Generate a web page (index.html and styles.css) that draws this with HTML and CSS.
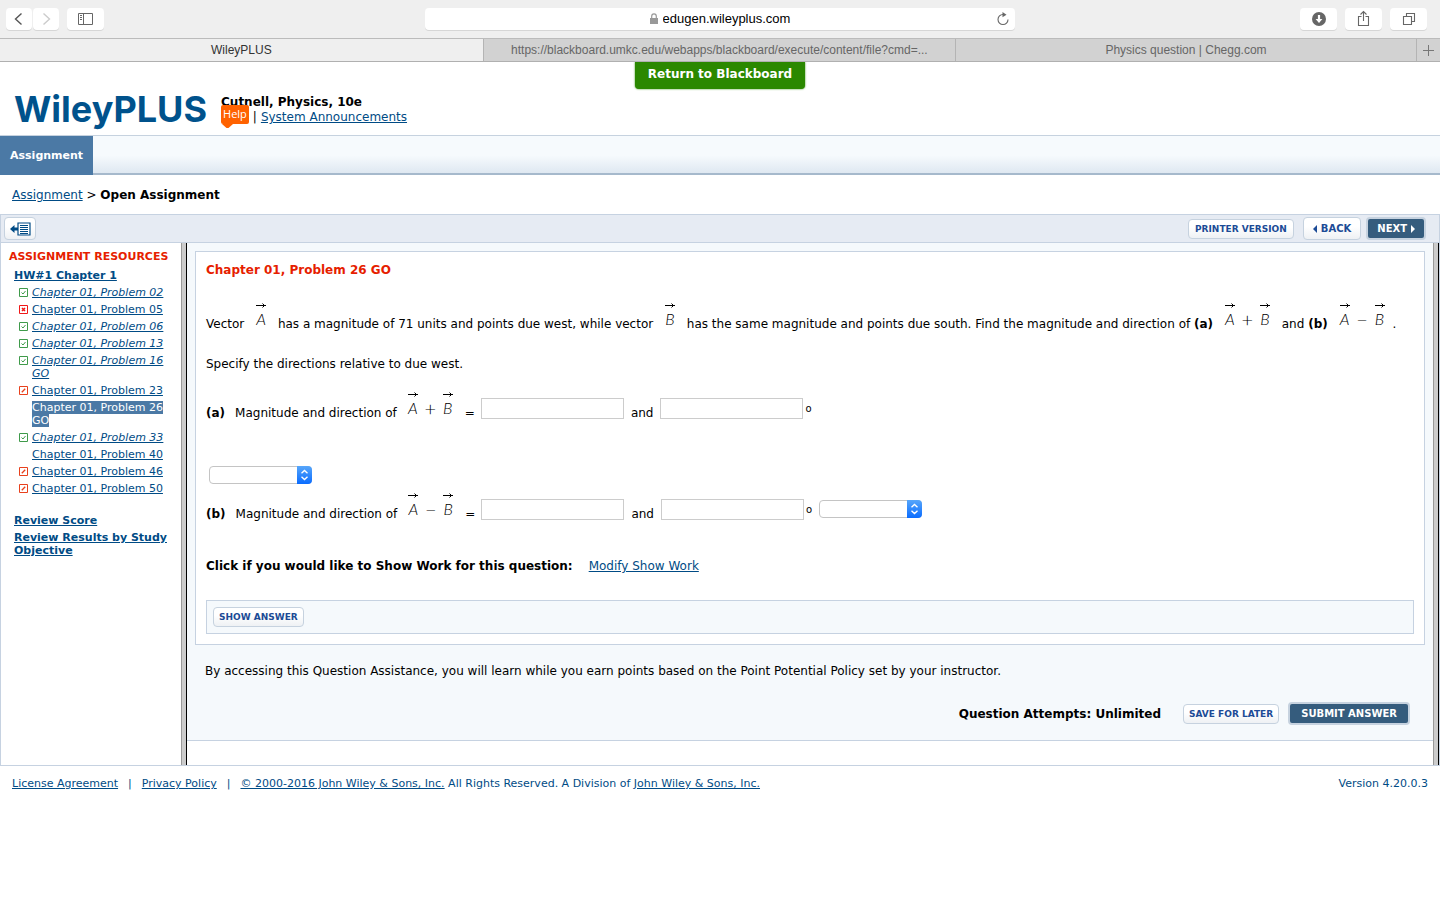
FILE: index.html
```html
<!DOCTYPE html>
<html lang="en">
<head>
<meta charset="utf-8">
<title>WileyPLUS</title>
<link rel="stylesheet" href="styles.css">
</head>
<body>
<svg class="defs" width="0" height="0" aria-hidden="true">
  <symbol id="arrow" viewBox="0 0 10 5"><path d="M0 2.500H10M6.500 .5L8.500 2.500L6.500 4.500" fill="none" stroke="#000"/></symbol>
  <symbol id="ok" viewBox="0 0 9 9"><path d="M.5 .5H8.500V8.500H.5Z" fill="#fff" stroke="#3f9a4a"/><path d="M2.500 4.500L4 6L6.500 3" fill="none" stroke="#3f9a4a"/></symbol>
  <symbol id="wrong" viewBox="0 0 9 9"><path d="M.5 .5H8.500V8.500H.5Z" fill="#fff" stroke="#f01818"/><path d="M3 3L6 6M6 3L3 6" fill="none" stroke="#f01818" stroke-width="1.500"/></symbol>
  <symbol id="part" viewBox="0 0 9 9"><path d="M.5 .5H8.500V8.500H.5Z" fill="#fff" stroke="#e8401c"/><path d="M2.800 6.200L6.200 2.800" fill="none" stroke="#e8401c" stroke-width="1.300"/></symbol>
  <symbol id="updown" viewBox="0 0 15 18"><path d="M4.500 7.200L7.500 4.500L10.500 7.200M4.500 10.800L7.500 13.500L10.500 10.800" fill="none" stroke="#fff" stroke-width="1.400"/></symbol>
</svg>

<div class="browser">
  <div class="browser-bar">
    <div class="bar-side">
      <div class="nav-pair">
        <button class="chip narrow" aria-label="Back"><svg width="26" height="22" viewBox="0 0 26 22"><path d="M15.500 5.500L9.500 11L15.500 16.500" fill="none" stroke="#555" stroke-width="1.400"/></svg></button>
        <button class="chip narrow" aria-label="Forward"><svg width="26" height="22" viewBox="0 0 26 22"><path d="M10.500 5.500L16.500 11L10.500 16.500" fill="none" stroke="#ccc" stroke-width="1.400"/></svg></button>
      </div>
      <button class="chip" aria-label="Sidebar"><svg width="37" height="22" viewBox="0 0 37 22"><path d="M11.500 5.500H25.500V16.500H11.500ZM16.500 5.500V16.500M13 7.500H15M13 9.500H15M13 11.500H15" fill="none" stroke="#666"/></svg></button>
    </div>
    <div class="address">
      <svg width="8" height="12" viewBox="0 0 8 12"><path d="M0 5H8V11H0Z" fill="#999"/><path d="M1.700 5V3.200a2.300 2.300 0 0 1 4.600 0V5" fill="none" stroke="#999" stroke-width="1.200"/></svg>
      <input class="url" aria-label="Address" value="edugen.wileyplus.com">
      <button class="reload" aria-label="Reload"><svg width="14" height="14" viewBox="0 0 14 14"><path d="M7 2.500A5 5 0 1 0 12 7.500" fill="none" stroke="#666" stroke-width="1.100"/><path d="M6.500 0L10.500 2.700L6.500 5.200Z" fill="#666"/></svg></button>
    </div>
    <div class="bar-side end">
      <button class="chip" aria-label="Downloads"><svg width="37" height="22" viewBox="0 0 37 22"><circle cx="19" cy="11" r="7" fill="#666"/><path d="M19 7V12" stroke="#fff" stroke-width="2.200"/><path d="M15.600 11H22.400L19 15Z" fill="#fff"/></svg></button>
      <button class="chip" aria-label="Share"><svg width="37" height="22" viewBox="0 0 37 22"><path d="M16.500 8.500H13.500V17.500H23.500V8.500H20.500M18.500 13V3.500M15.500 6.500L18.500 3.500L21.500 6.500" fill="none" stroke="#666" stroke-width="1.100"/></svg></button>
      <button class="chip" aria-label="Tabs"><svg width="37" height="22" viewBox="0 0 37 22"><path d="M13.500 8.500H21.500V16.500H13.500ZM16.500 8V5.500H24.500V13.500H22" fill="none" stroke="#666" stroke-width="1.100"/></svg></button>
    </div>
  </div>
  <div class="tabs">
    <button class="tab active">WileyPLUS</button>
    <button class="tab">https://blackboard.umkc.edu/webapps/blackboard/execute/content/file?cmd=...</button>
    <button class="tab">Physics question | Chegg.com</button>
    <button class="tab-add" aria-label="New tab"><svg width="11" height="11" viewBox="0 0 11 11"><path d="M0 5.500H11M5.500 0V11" stroke="#777"/></svg></button>
  </div>
</div>

<a class="return" href="#">Return to Blackboard</a>

<header class="header">
  <div class="logo">WileyPLUS</div>
  <div class="course">
    <strong>Cutnell, Physics, 10e</strong>
    <div class="course-links">
      <a class="help" href="#">Help<svg width="12" height="4" viewBox="0 0 12 4"><path d="M1 0H12L7.500 4L5.500 4Z" fill="#ff6200"/></svg></a>
      <span>|</span>
      <a href="#">System Announcements</a>
    </div>
  </div>
</header>

<nav class="main-nav"><a href="#">Assignment</a></nav>

<div class="crumbs"><a href="#">Assignment</a> &gt; <strong>Open Assignment</strong></div>

<div class="workspace">
  <div class="tools">
    <button class="btn icon-btn" aria-label="Hide resources"><svg width="21" height="14" viewBox="0 0 21 14"><path d="M0 7L4.500 3V5.500H8V8.500H4.500V11Z" fill="#004b85"/><path d="M8 1H20V13H8Z" fill="#fff" stroke="#004b85" stroke-width="1.200"/><path d="M10 3.500H18M10 5.500H18M10 7.500H18M10 9.500H18M10 11.500H18" stroke="#004b85" stroke-width="1"/></svg></button>
    <div class="tool-actions">
      <button class="btn small printer">PRINTER VERSION</button>
      <button class="btn"><svg width="4" height="8" viewBox="0 0 4 8"><path d="M4 0V8L0 4Z" fill="#1c4b96"/></svg>BACK</button>
      <button class="btn dark">NEXT<svg width="4" height="8" viewBox="0 0 4 8"><path d="M0 0V8L4 4Z" fill="#fff"/></svg></button>
    </div>
  </div>
  <div class="columns">
    <aside class="sidebar">
      <h2>ASSIGNMENT RESOURCES</h2>
      <a class="group" href="#">HW#1 Chapter 1</a>
      <ul class="problems">
        <li><svg><use href="#ok"/></svg><a class="done" href="#">Chapter 01, Problem 02</a></li>
        <li><svg><use href="#wrong"/></svg><a href="#">Chapter 01, Problem 05</a></li>
        <li><svg><use href="#ok"/></svg><a class="done" href="#">Chapter 01, Problem 06</a></li>
        <li><svg><use href="#ok"/></svg><a class="done" href="#">Chapter 01, Problem 13</a></li>
        <li><svg><use href="#ok"/></svg><a class="done" href="#">Chapter 01, Problem 16 GO</a></li>
        <li><svg><use href="#part"/></svg><a href="#">Chapter 01, Problem 23</a></li>
        <li><svg></svg><span><a class="current" href="#">Chapter 01, Problem 26 GO</a></span></li>
        <li><svg><use href="#ok"/></svg><a class="done" href="#">Chapter 01, Problem 33</a></li>
        <li><svg></svg><a href="#">Chapter 01, Problem 40</a></li>
        <li><svg><use href="#part"/></svg><a href="#">Chapter 01, Problem 46</a></li>
        <li><svg><use href="#part"/></svg><a href="#">Chapter 01, Problem 50</a></li>
      </ul>
      <a class="group" href="#">Review Score</a>
      <a class="group" href="#">Review Results by Study Objective</a>
    </aside>
    <div class="divider"></div>
    <main class="main">
      <div class="question-area">
        <section class="card">
          <h1>Chapter 01, Problem 26 GO</h1>
          <p class="statement">Vector <span class="formula"><span class="vec"><svg><use href="#arrow"/></svg>A</span></span> has a magnitude of 71 units and points due west, while vector <span class="formula"><span class="vec"><svg><use href="#arrow"/></svg>B</span></span> has the same magnitude and points due south. Find the magnitude and direction of <b>(a)</b> <span class="formula"><span class="vec"><svg><use href="#arrow"/></svg>A</span><span class="op">+</span><span class="vec"><svg><use href="#arrow"/></svg>B</span></span> and <b>(b)</b> <span class="formula"><span class="vec"><svg><use href="#arrow"/></svg>A</span><span class="op">−</span><span class="vec"><svg><use href="#arrow"/></svg>B</span></span>.<br>Specify the directions relative to due west.</p>
          <div class="answer">
            <span class="prompt"><b>(a)</b>Magnitude and direction of</span>
            <span class="formula"><span class="vec"><svg><use href="#arrow"/></svg>A</span><span class="op">+</span><span class="vec"><svg><use href="#arrow"/></svg>B</span></span>
            <span class="eq">=</span>
            <input class="field" aria-label="Part a magnitude">
            <span class="and">and</span>
            <input class="field" aria-label="Part a angle">
            <span class="deg">o</span>
          </div>
          <div class="direction">
            <span class="pick"><select aria-label="Part a direction"><option></option></select><svg><use href="#updown"/></svg></span>
          </div>
          <div class="answer">
            <span class="prompt"><b>(b)</b>Magnitude and direction of</span>
            <span class="formula"><span class="vec"><svg><use href="#arrow"/></svg>A</span><span class="op">−</span><span class="vec"><svg><use href="#arrow"/></svg>B</span></span>
            <span class="eq">=</span>
            <input class="field" aria-label="Part b magnitude">
            <span class="and">and</span>
            <input class="field" aria-label="Part b angle">
            <span class="deg">o</span>
            <span class="pick"><select aria-label="Part b direction"><option></option></select><svg><use href="#updown"/></svg></span>
          </div>
          <div class="show-work"><strong>Click if you would like to Show Work for this question:</strong><a href="#">Modify Show Work</a></div>
          <div class="answer-bar"><button class="btn small">SHOW ANSWER</button></div>
        </section>
        <p class="policy">By accessing this Question Assistance, you will learn while you earn points based on the Point Potential Policy set by your instructor.</p>
        <div class="submit-row">
          <strong>Question Attempts: Unlimited</strong>
          <button class="btn small save">SAVE FOR LATER</button>
          <button class="btn dark submit">SUBMIT ANSWER</button>
        </div>
      </div>
    </main>
    <div class="divider"></div>
  </div>
</div>

<footer class="footer">
  <div><a href="#">License Agreement</a><span class="bar">|</span><a href="#">Privacy Policy</a><span class="bar">|</span><a href="#">© 2000-2016 John Wiley &amp; Sons, Inc.</a> All Rights Reserved. A Division of <a href="#">John Wiley &amp; Sons, Inc.</a></div>
  <div>Version 4.20.0.3</div>
</footer>
</body>
</html>
```

FILE: styles.css
```css
* { box-sizing: border-box; }
body {
  margin: 0;
  background: #fff;
  color: #000;
  font: 12px/16px Verdana, "DejaVu Sans", sans-serif;
}
a { color: #004b85; }
button, input, select { font: inherit; margin: 0; }
svg { display: block; flex: none; }
.defs { position: absolute; }

/* Browser chrome */
.browser { font-family: "Liberation Sans", Arial, sans-serif; }
.browser-bar {
  display: grid;
  grid-template-columns: 1fr minmax(0, 590px) 1fr;
  align-items: center;
  height: 38px;
  background: #efefef;
}
.bar-side { display: flex; gap: 8px; padding-left: 6px; }
.bar-side.end { justify-content: flex-end; padding: 0 13px 0 0; }
.nav-pair { display: flex; gap: 1px; }
.chip {
  width: 37px;
  height: 22px;
  padding: 0;
  border: 0;
  border-radius: 4px;
  background: #fff;
  box-shadow: 0 1px 0 #d6d6d6;
}
.chip.narrow { width: 26px; }
.address {
  display: flex;
  align-items: center;
  justify-content: center;
  gap: 5px;
  position: relative;
  height: 22px;
  border-radius: 4px;
  background: #fff;
  box-shadow: 0 1px 0 #d6d6d6;
}
.url {
  width: 128px;
  padding: 0;
  border: 0;
  background: none;
  font-size: 13px;
}
.reload {
  position: absolute;
  right: 5px;
  top: 4px;
  padding: 0;
  border: 0;
  background: none;
}
.tabs {
  display: flex;
  height: 24px;
  border-top: 1px solid #bbb;
  border-bottom: 1px solid #b0b0b0;
  background: #d2d2d2;
}
.tab {
  flex: 460;
  min-width: 0;
  padding: 0 12px;
  border: 0;
  border-right: 1px solid #b4b4b4;
  background: none;
  color: #666;
  font-size: 12px;
  line-height: 22px;
  white-space: nowrap;
}
.tab:nth-child(2) { flex-grow: 472; }
.tab.active { flex-grow: 484; background: #efefef; color: #333; }
.tab-add {
  display: flex;
  align-items: center;
  justify-content: center;
  width: 23px;
  padding: 0;
  border: 0;
  background: none;
}

/* Page header */
.return {
  display: block;
  width: 170px;
  height: 27px;
  margin: 0 auto;
  border-radius: 0 0 4px 4px;
  background: #2b8800;
  box-shadow: 0 0 2px #2b8800;
  clip-path: inset(0 -3px -3px);
  color: #fff;
  font-weight: bold;
  line-height: 24px;
  text-align: center;
  text-decoration: none;
}
.header {
  display: flex;
  gap: 14px;
  height: 46px;
  padding: 0 14px;
}
.logo {
  color: #00528c;
  font: bold 36px/40px Inter, "Liberation Sans", sans-serif;
}
.course { padding-top: 6px; line-height: 15px; }
.course-links { display: flex; gap: 4px; }
.help {
  position: relative;
  height: 19px;
  margin-top: -5px;
  padding: 0 2px;
  border-radius: 2px;
  background: #ff6200;
  color: #fff;
  font: 11px/18px "Open Sans", sans-serif;
  text-decoration: none;
}
.help svg { position: absolute; left: 0; top: 19px; }
.main-nav {
  display: flex;
  height: 40px;
  border-top: 1px solid #c6d2df;
  background: linear-gradient(#f6fafd 0, #f6fafd 50%, #dce6f0 100%);
  box-shadow: inset 0 -2px 0 #a6b9cc;
}
.main-nav a {
  padding: 0 10px;
  background: #4b79a5;
  color: #fff;
  font-size: 11px;
  font-weight: bold;
  line-height: 39px;
  text-decoration: none;
}
.crumbs { padding: 12px 12px 11px; }

/* Workspace */
.workspace { border: 1px solid #c6d2e1; }
.tools {
  display: flex;
  align-items: center;
  justify-content: space-between;
  height: 28px;
  padding: 0 13px 0 3px;
  border-bottom: 1px solid #c6d2e1;
  background: #e6ebf3;
}
.tool-actions { display: flex; align-items: center; gap: 5px; }
.btn {
  display: flex;
  align-items: center;
  justify-content: center;
  gap: 4px;
  height: 23px;
  padding: 0 9px;
  border: 1px solid #c6d2df;
  border-radius: 4px;
  background: linear-gradient(#fff 40%, #eef1f4);
  color: #1c4b96;
  font-size: 10px;
  font-weight: bold;
  white-space: nowrap;
}
.btn.small { height: 20px; padding: 0 5px; font-size: 9px; }
.btn.printer { margin-right: 4px; padding: 0 6px; }
.btn.dark {
  border: 2px solid #c6d2df;
  background: #355c7d;
  color: #fff;
}
.btn.icon-btn { width: 32px; padding: 0; }
.columns { display: flex; min-height: 522px; }
.sidebar { flex: 0 0 180px; padding: 7px 8px; font-size: 11px; line-height: 13px; }
.sidebar h2 {
  margin: 0 0 6px;
  color: #e61e00;
  font-size: 11px;
  line-height: 13px;
  white-space: nowrap;
}
.group { display: block; margin: 0 0 4px 5px; font-weight: bold; }
.problems {
  display: grid;
  gap: 4px;
  margin: 0 0 19px;
  padding: 0 0 0 10px;
  list-style: none;
}
.problems li { display: flex; gap: 4px; }
.problems svg { width: 9px; height: 9px; margin-top: 2px; }
.done { font-style: italic; }
.current { background: #4b79a5; color: #fff; text-decoration: none; }
.divider {
  flex: 0 0 6px;
  border-left: 1px solid #999;
  border-right: 1px solid #000;
  background: #ccc;
}
.main { flex: 1; min-width: 0; }
.question-area {
  padding: 8px;
  border-bottom: 1px solid #c6d2e1;
  background: #f5f9fc;
}
.card {
  padding: 10px;
  border: 1px solid #c6d2e1;
  background: #fff;
}
.card h1 { margin: 0 0 25px; color: #e61e00; font-size: 12px; line-height: 16px; }
.statement { margin: 0 0 6px; line-height: 40px; }
.formula {
  display: inline-flex;
  align-items: flex-end;
  margin: 0 7px;
  vertical-align: 20px;
  font: italic 300 16px/16px Lato, sans-serif;
}
.vec {
  display: inline-flex;
  flex-direction: column;
  align-items: center;
  gap: 3px;
  width: 12px;
}
.vec svg { width: 10px; height: 5px; }
.op { width: 23px; font-size: 20px; text-align: center; font-style: normal; }
.answer { display: flex; align-items: flex-end; height: 31px; }
.answer .formula { margin: 0 11px 5px 10px; }
.prompt b { margin-right: 10px; }
.field {
  width: 143px;
  height: 21px;
  margin-bottom: 2px;
  border: 1px solid #ccc;
}
.eq { margin-right: 6px; }
.and { margin: 0 7px; }
.deg { margin: 0 0 4px 2px; font-size: 10px; }
.direction { padding: 45px 0 7px 3px; }
.pick { display: block; position: relative; width: 103px; height: 18px; }
.pick select {
  display: block;
  width: 100%;
  height: 100%;
  border: 1px solid #c4c4c4;
  border-radius: 4px;
  background: #fff;
  appearance: none;
}
.pick svg {
  position: absolute;
  top: 0;
  right: 0;
  width: 15px;
  height: 18px;
  border-radius: 0 4px 4px 0;
  background: linear-gradient(#57a6fa, #0a6cff);
  pointer-events: none;
}
.answer .pick { margin: 0 0 4px 7px; }
.show-work { display: flex; gap: 16px; padding: 36px 0 26px; }
.answer-bar {
  padding: 6px;
  border: 1px solid #c6d2e1;
  background: #f5f9fc;
}
.policy { margin: 18px 10px 23px; }
.submit-row {
  display: flex;
  align-items: center;
  justify-content: flex-end;
  padding: 0 15px 7px;
}
.btn.save { margin: 0 9px 0 22px; }
.btn.submit { padding: 0 11px; }

.footer {
  display: flex;
  justify-content: space-between;
  padding: 10px 12px;
  color: #004b85;
  font-size: 11px;
}
.bar { margin: 0 10px; }
```
